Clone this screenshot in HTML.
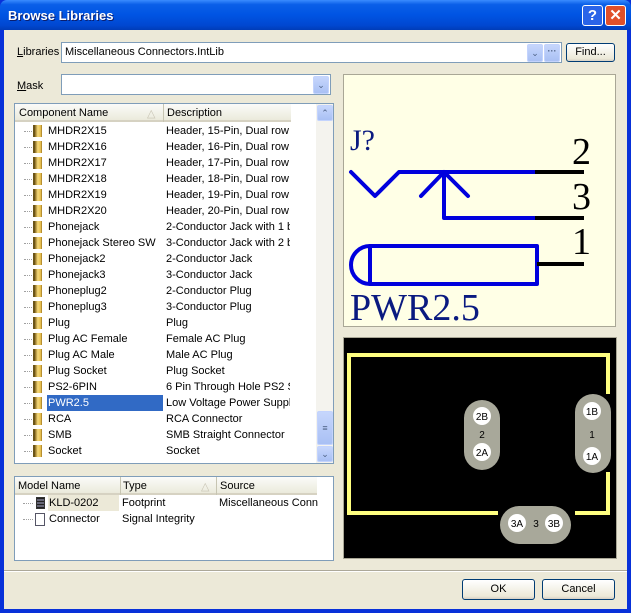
<!DOCTYPE html>
<html><head><meta charset="utf-8"><style>
*{margin:0;padding:0;box-sizing:border-box}
body{width:631px;height:613px;overflow:hidden;background:#0831d9;font-family:"Liberation Sans",sans-serif;font-size:11px;color:#000;position:relative}
.a{position:absolute}
#title{left:0;top:0;width:631px;height:30px;background:linear-gradient(#3a8cff 0%,#0a5fe8 15%,#0054e3 50%,#0047d0 85%,#003cb8 100%);border-radius:7px 7px 0 0}
#title span{position:absolute;left:8px;top:8px;color:#fff;font-weight:bold;font-size:13px;text-shadow:1px 1px #0a1e6e}
.tb{top:5px;width:21px;height:21px;border:1px solid #fff;border-radius:3px;color:#fff;font-weight:bold;text-align:center;line-height:19px;font-size:15px}
#client{left:4px;top:30px;width:623px;height:579px;background:#ece9d8}
.combo{background:#fff;border:1px solid #7f9db9}
.dd{width:16px;height:18px;background:linear-gradient(#c6d6fc,#a9c0f4);border:1px solid #c3d3fd;border-radius:2px;color:#4d6185;font-size:9px;text-align:center;line-height:16px}
.btn{border:1px solid #003c74;border-radius:3px;background:linear-gradient(#fff,#ece9d8 85%,#d6d0c5);text-align:center}
.list{background:#fff;border:1px solid #7f9db9}
.hdr{background:linear-gradient(#fbfbf9,#ebeadb);border-bottom:2px solid #d6d2c2;height:18px}
.hdr span{position:absolute;top:3px}
.row{position:absolute;height:16px;line-height:16px;white-space:nowrap}
.ic{position:absolute;width:9px;height:12px;top:2px;background:linear-gradient(90deg,#8a6a20,#f5d97a 40%,#e8c050 80%,#9a7420);border-left:2px solid #6b5518}
.dot{position:absolute;top:8px;width:10px;border-top:1px dotted #a0a0a0}
</style></head><body>
<div id="title" class="a"><span>Browse Libraries</span>
<div class="a tb" style="left:582px;background:#2a64e8">?</div>
<div class="a tb" style="left:605px;background:#e0502a">✕</div></div>
<div id="client" class="a"></div>
<div class="a" style="left:17px;top:46px"><u>L</u>ibraries</div>
<div class="a combo" style="left:61px;top:42px;width:501px;height:21px"><span class="a" style="left:3px;top:3px">Miscellaneous Connectors.IntLib</span>
<div class="a dd" style="left:465px;top:1px">&#8964;</div><div class="a dd" style="left:482px;top:1px;font-weight:bold;line-height:12px">···</div></div>
<div class="a btn" style="left:566px;top:43px;width:49px;height:19px;line-height:17px">Find...</div>
<div class="a" style="left:17px;top:80px"><u>M</u>ask</div>
<div class="a combo" style="left:61px;top:74px;width:270px;height:21px"><div class="a dd" style="left:251px;top:1px">&#8964;</div></div>

<div class="a list" style="left:14px;top:103px;width:320px;height:361px;overflow:hidden">
<div class="a hdr" style="left:0;top:0;width:276px"><span style="left:4px">Component Name</span><span style="left:132px;color:#c8c4b4">&#9651;</span><span style="left:148px;top:0;height:18px;border-left:1px solid #c7c5b2"></span><span style="left:152px">Description</span></div>
<div class="a" style="left:301px;top:0;width:17px;height:359px;background:#f4f3ee"></div>
<div class="a dd" style="left:302px;top:1px;height:16px;line-height:14px">&#8963;</div>
<div class="a dd" style="left:302px;top:307px;height:34px;line-height:32px">≡</div>
<div class="a dd" style="left:302px;top:342px;height:16px;line-height:14px">&#8964;</div>
<div id="rows"></div>
</div>

<div class="a list" style="left:14px;top:476px;width:320px;height:85px">
<div class="a hdr" style="left:0;top:0;width:302px"><span style="left:3px">Model Name</span><span style="left:105px;top:0;height:18px;border-left:1px solid #c7c5b2"></span><span style="left:108px">Type</span><span style="left:186px;color:#c8c4b4">&#9651;</span><span style="left:201px;top:0;height:18px;border-left:1px solid #c7c5b2"></span><span style="left:205px">Source</span></div>
<div class="row" style="left:0;top:18px;width:320px"><div class="dot" style="left:8px"></div><div class="a" style="left:21px;top:2px;width:9px;height:12px;background:repeating-linear-gradient(#222 0 1px,#667 1px 3px);border:1px solid #333"></div><span class="a" style="left:33px;background:#ece9d8;width:71px;padding-left:1px">KLD-0202</span><span class="a" style="left:107px">Footprint</span><span class="a" style="left:204px">Miscellaneous Conn</span></div>
<div class="row" style="left:0;top:34px;width:320px"><div class="dot" style="left:8px"></div><div class="a" style="left:20px;top:2px;width:10px;height:13px;background:#fff;border:1px solid #556"></div><span class="a" style="left:34px">Connector</span><span class="a" style="left:107px">Signal Integrity</span></div>
</div>

<div class="a" style="left:343px;top:74px;width:273px;height:253px;background:#ffffe6;border:1px solid #a9a796">
<svg width="273" height="253" style="position:absolute;left:-1px;top:-1px">
<g fill="none" stroke="#0000dd" stroke-width="4" stroke-linecap="round" stroke-linejoin="round" transform="translate(-340,-70)">
<path d="M348 168 L372 192 L396 168 L532 168"/><path d="M418 192 L441 168 L465 192 M441 168 L441 214 L532 214"/>
<rect x="367" y="242" width="167" height="38"/><path d="M367 242 A19 19 0 0 0 367 280"/></g>
<g stroke="#000" stroke-width="4" transform="translate(-340,-70)"><path d="M532 168H581M532 214H581M534 260H581"/></g>
<g font-family="Liberation Serif,serif" fill="#000" font-size="38" transform="translate(-340,-70)"><text x="569" y="160">2</text><text x="569" y="205">3</text><text x="569" y="250">1</text></g>
<g font-family="Liberation Serif,serif" fill="#0a1a80" transform="translate(-340,-70)"><text x="347" y="146" font-size="30">J?</text><text x="347" y="316" font-size="38">PWR2.5</text></g>
</svg></div>

<div class="a" style="left:343px;top:337px;width:274px;height:222px;background:#000;border:1px solid #a9a796">
<svg width="274" height="222" style="position:absolute;left:-1px;top:-1px">
<g transform="translate(-343,-337)">
<path d="M498 513 H349 V355 H608 V394 M608 472 V513 H575" fill="none" stroke="#ffff80" stroke-width="4"/>
<rect x="464" y="400" width="36" height="70" rx="18" fill="#a8a89a"/>
<rect x="575" y="394" width="36" height="79" rx="18" fill="#a8a89a"/>
<rect x="500" y="506" width="71" height="38" rx="19" fill="#a8a89a"/>
<g fill="#fff"><circle cx="482" cy="416" r="9"/><circle cx="482" cy="452" r="9"/><circle cx="592" cy="411" r="9"/><circle cx="592" cy="456" r="9"/><circle cx="517" cy="523" r="9"/><circle cx="554" cy="523" r="9"/></g>
<g font-size="10" text-anchor="middle" fill="#000" font-family="Liberation Sans,sans-serif"><text x="482" y="420">2B</text><text x="482" y="438">2</text><text x="482" y="456">2A</text><text x="592" y="415">1B</text><text x="592" y="438">1</text><text x="592" y="460">1A</text><text x="517" y="527">3A</text><text x="536" y="527">3</text><text x="554" y="527">3B</text></g>
</g></svg></div>

<div class="a" style="left:4px;top:570px;width:623px;border-top:1px solid #aca899;border-bottom:1px solid #fff"></div>
<div class="a btn" style="left:462px;top:579px;width:73px;height:21px;line-height:19px">OK</div>
<div class="a btn" style="left:542px;top:579px;width:73px;height:21px;line-height:19px">Cancel</div>

<script>
var d=[["MHDR2X15","Header, 15-Pin, Dual row"],["MHDR2X16","Header, 16-Pin, Dual row"],["MHDR2X17","Header, 17-Pin, Dual row"],["MHDR2X18","Header, 18-Pin, Dual row"],["MHDR2X19","Header, 19-Pin, Dual row"],["MHDR2X20","Header, 20-Pin, Dual row"],["Phonejack","2-Conductor Jack with 1 b"],["Phonejack Stereo SW","3-Conductor Jack with 2 b"],["Phonejack2","2-Conductor Jack"],["Phonejack3","3-Conductor Jack"],["Phoneplug2","2-Conductor Plug"],["Phoneplug3","3-Conductor Plug"],["Plug","Plug"],["Plug AC Female","Female AC Plug"],["Plug AC Male","Male AC Plug"],["Plug Socket","Plug Socket"],["PS2-6PIN","6 Pin Through Hole PS2 S"],["PWR2.5","Low Voltage Power Suppl"],["RCA","RCA Connector"],["SMB","SMB Straight Connector"],["Socket","Socket"]];
var h="";d.forEach(function(r,i){var t=19+i*16,s=i==17;
h+='<div class="row" style="left:0;top:'+t+'px;width:300px"><div class="dot" style="left:9px"></div><div class="ic" style="left:18px"></div><span class="a" style="left:32px;width:116px;padding-left:1px;'+(s?'background:#316ac5;color:#fff':'')+'">'+r[0]+'</span><span class="a" style="left:151px;width:124px;overflow:hidden">'+r[1]+'</span></div>';});
document.getElementById("rows").innerHTML=h;
</script>
</body></html>
